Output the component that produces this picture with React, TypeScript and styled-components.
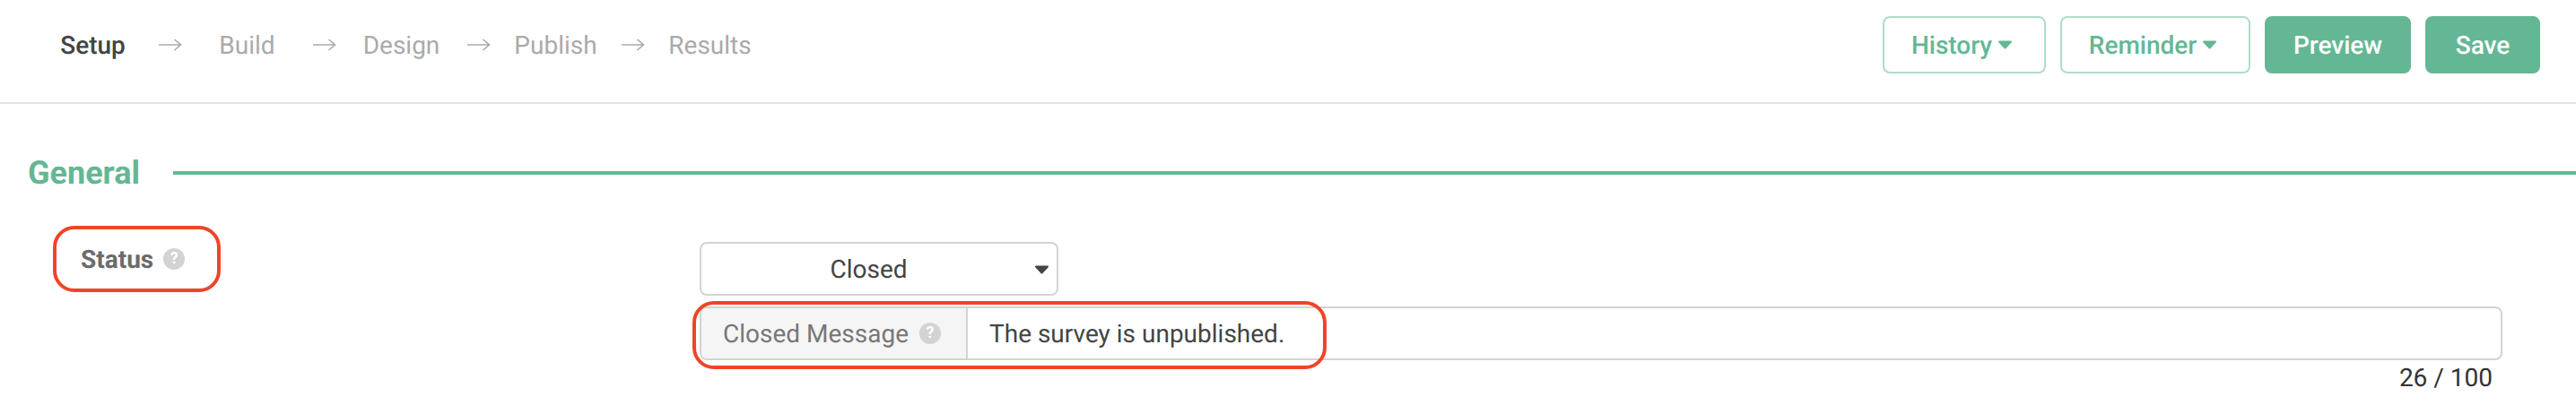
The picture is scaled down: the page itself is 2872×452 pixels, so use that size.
import { Fragment } from "react";
import styled, { createGlobalStyle } from "styled-components";

const GlobalStyle = createGlobalStyle`
  html, body {
    margin: 0;
    padding: 0;
    background: #fff;
  }
  body {
    font-family: Roboto, "Liberation Sans", sans-serif;
    font-size: 28px;
    color: #444;
    text-rendering: geometricPrecision;
  }
  * {
    box-sizing: border-box;
  }
`;

const Page = styled.div`
  width: 2872px;
  height: 452px;
  overflow: hidden;
`;

const Header = styled.header`
  height: 116px;
  padding: 18px 40px 0 46px;
  display: flex;
  justify-content: space-between;
  align-items: flex-start;
  border-bottom: 2px solid #e4e4e4;
`;

const Steps = styled.nav`
  display: flex;
  align-items: center;
  height: 64px;
`;

const Step = styled.span<{ $active?: boolean }>`
  width: 115px;
  text-align: center;
  font-weight: ${(props) => (props.$active ? 500 : 400)};
  color: ${(props) => (props.$active ? "#444" : "#aaa")};
`;

const StepArrow = styled.svg`
  width: 57px;
  height: 14px;
  flex-shrink: 0;
  stroke: #aaa;
  stroke-width: 1.6;
  fill: none;
`;

const Actions = styled.div`
  display: flex;
  gap: 16px;
`;

const Button = styled.button<{ $outline?: boolean; $width: number }>`
  width: ${(props) => props.$width}px;
  height: 64px;
  display: flex;
  align-items: center;
  justify-content: center;
  gap: 6px;
  padding: ${(props) => (props.$outline ? "0 5px 0 0" : "0")};
  border-radius: 8px;
  border: 2px solid ${(props) => (props.$outline ? "#b1dcc9" : "#64b794")};
  background: ${(props) => (props.$outline ? "#fff" : "#64b794")};
  color: ${(props) => (props.$outline ? "#64b794" : "#fff")};
  font-family: inherit;
  font-size: 28px;
  font-weight: 500;
  text-rendering: geometricPrecision;
`;

const Caret = styled.svg<{ $color: string }>`
  width: 17px;
  height: 10px;
  fill: ${(props) => props.$color};
  stroke: ${(props) => props.$color};
  stroke-width: 2;
  stroke-linejoin: round;
`;

const SectionHead = styled.div`
  display: flex;
  align-items: center;
  gap: 37px;
  margin-top: 55px;
  padding-left: 31px;
  height: 44px;
`;

const SectionTitle = styled.h2`
  margin: 0;
  font-size: 36px;
  font-weight: 700;
  line-height: 44px;
  color: #64b794;
`;

const SectionRule = styled.div`
  flex: 1;
  height: 4px;
  background: #64b794;
`;

const FormRow = styled.div`
  display: grid;
  grid-template-columns: 690px 2010px;
  padding-left: 90px;
  margin-top: 55px;
`;

const FieldLabel = styled.div`
  position: relative;
  align-self: flex-start;
  display: flex;
  align-items: center;
  gap: 11px;
  width: max-content;
  height: 32px;
  margin-top: 3px;
  font-weight: 700;
  color: #6b6b6b;
`;

const Highlight = styled.div<{ $inset: string }>`
  position: absolute;
  inset: ${(props) => props.$inset};
  border: 4px solid #ee4527;
  border-radius: 24px;
  pointer-events: none;
`;

const Help = styled.span`
  width: 24px;
  height: 24px;
  border-radius: 50%;
  background: #d3d3d3;
  color: #fff;
  font-size: 18px;
  font-weight: 700;
  line-height: 24px;
  text-align: center;
  flex-shrink: 0;
`;

const Controls = styled.div`
  display: flex;
  flex-direction: column;
`;

const Select = styled.div`
  position: relative;
  width: 400px;
  height: 60px;
  margin-bottom: 12px;
  padding-right: 23px;
  display: flex;
  align-items: center;
  justify-content: center;
  border: 2px solid #d3d3d3;
  border-radius: 8px;
  color: #444;
`;

const SelectCaret = styled(Caret)`
  position: absolute;
  right: 8px;
  top: 24px;
`;

const InputGroup = styled.div`
  position: relative;
  height: 60px;
  display: flex;
  border: 2px solid #d3d3d3;
  border-radius: 8px;
`;

const Addon = styled.div`
  width: 297px;
  display: flex;
  align-items: center;
  gap: 12px;
  padding-left: 24px;
  background: #f5f5f5;
  border-right: 2px solid #d3d3d3;
  border-radius: 6px 0 0 6px;
  color: #777;
`;

const TextInput = styled.input`
  flex: 1;
  border: 0;
  outline: 0;
  padding: 0 24px;
  background: transparent;
  font-family: inherit;
  font-size: 28px;
  color: #444;
  text-rendering: geometricPrecision;
`;

const Counter = styled.div`
  margin-top: 2px;
  padding-right: 11px;
  text-align: right;
  line-height: 36px;
  color: #333;
`;

const steps = ["Setup", "Build", "Design", "Publish", "Results"];

function CaretIcon({ color }: { color: string }) {
  return (
    <Caret $color={color} viewBox="0 0 17 10">
      <path d="M2 1.5h13L8.5 8.5z" />
    </Caret>
  );
}

export default function App() {
  return (
    <Page>
      <GlobalStyle />
      <Header>
        <Steps>
          {steps.map((step, i) => (
            <Fragment key={step}>
              <Step $active={i === 0}>{step}</Step>
              {i < steps.length - 1 && (
                <StepArrow viewBox="0 0 57 14">
                  <path d="M16 7h24M33.5 1l7 6-7 6" />
                </StepArrow>
              )}
            </Fragment>
          ))}
        </Steps>
        <Actions>
          <Button $outline $width={182}>
            History
            <CaretIcon color="#64b794" />
          </Button>
          <Button $outline $width={212}>
            Reminder
            <CaretIcon color="#64b794" />
          </Button>
          <Button $width={163}>Preview</Button>
          <Button $width={128}>Save</Button>
        </Actions>
      </Header>

      <SectionHead>
        <SectionTitle>General</SectionTitle>
        <SectionRule />
      </SectionHead>

      <FormRow>
        <FieldLabel>
          Status
          <Help>?</Help>
          <Highlight $inset="-21px -40px -21px -31px" />
        </FieldLabel>
        <Controls>
          <Select>
            Closed
            <SelectCaret $color="#444" viewBox="0 0 17 10">
              <path d="M2 1.5h13L8.5 8.5z" />
            </SelectCaret>
          </Select>
          <InputGroup>
            <Addon>
              Closed Message
              <Help>?</Help>
            </Addon>
            <TextInput readOnly value="The survey is unpublished." />
            <Highlight $inset="-8px 1309px -12px -10px" />
          </InputGroup>
          <Counter>26 / 100</Counter>
        </Controls>
      </FormRow>
    </Page>
  );
}
